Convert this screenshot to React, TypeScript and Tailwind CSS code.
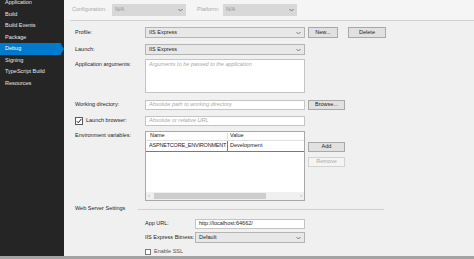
import React from 'react'

const navItems = ['Application', 'Build', 'Build Events', 'Package', 'Debug', 'Signing', 'TypeScript Build', 'Resources']

const Chevron = () => (
  <svg width="5" height="4" viewBox="0 0 5 4" className="shrink-0">
    <path d="M0.5 1 L2.5 3 L4.5 1" fill="none" stroke="#606060" strokeWidth="0.8" />
  </svg>
)

const Combo: React.FC<{ value: string; className?: string }> = ({ value, className = '' }) => (
  <div className={`flex items-center justify-between border border-[#b4b4b4] bg-[#e8e8e8] pl-[3px] pr-[3px] ${className}`}>
    <span>{value}</span>
    <Chevron />
  </div>
)

const Btn: React.FC<{ label: string; className?: string; disabled?: boolean }> = ({ label, className = '', disabled }) => (
  <div
    className={`flex items-center justify-center border ${
      disabled ? 'border-[#d2d2d2] bg-[#f4f4f4] text-[#a8a8a8]' : 'border-[#a8a8a8] bg-[#e1e1e1] text-[#222]'
    } ${className}`}
  >
    {label}
  </div>
)

const Field: React.FC<{ placeholder?: string; value?: string; className?: string }> = ({ placeholder, value, className = '' }) => (
  <div className={`flex items-center border border-[#c4c4c4] bg-white px-[3px] ${className}`}>
    {value ? <span>{value}</span> : <span className="italic text-[#a8a8a8]">{placeholder}</span>}
  </div>
)

export default function App() {
  return (
    <div className="flex h-[259px] w-[474px] flex-col overflow-hidden bg-[#f0f0f0] text-[5.5px] leading-none text-[#1e1e1e] [font-family:'Liberation_Sans',Arial,sans-serif]">
      <div className="flex h-[256px]">
        {/* Sidebar */}
        <div className="relative w-[64px] shrink-0 bg-[#252526]">
          <div className="mt-[-3px] flex flex-col">
            {navItems.map((item) => (
              <div
                key={item}
                className={`relative flex h-[11.5px] items-center pl-[5px] ${
                  item === 'Debug' ? 'mr-[3px] bg-[#007acc] text-white' : 'text-[#e8e8e8]'
                }`}
              >
                {item}
                {item === 'Debug' && (
                  <span className="absolute right-[-3px] top-1/2 h-0 w-0 -translate-y-1/2 border-y-[5.75px] border-l-[3px] border-y-transparent border-l-[#007acc]" />
                )}
              </div>
            ))}
          </div>
        </div>

        {/* Main */}
        <div className="flex min-w-0 flex-1 flex-col">
          {/* Config bar */}
          <div className="flex h-[20px] items-center bg-[#f5f5f5] pl-[8px] text-[#a8a8a8]">
            <span className="w-[40px]">Configuration:</span>
            <div className="flex h-[12px] w-[74px] items-center justify-between bg-[#d8d8d8] px-[3px] text-[#909090]">
              <span>N/A</span>
              <Chevron />
            </div>
            <span className="ml-[11px] w-[26px]">Platform:</span>
            <div className="flex h-[12px] w-[74px] items-center justify-between bg-[#d8d8d8] px-[3px] text-[#909090]">
              <span>N/A</span>
              <Chevron />
            </div>
          </div>
          <div className="ml-[6px] h-px bg-[#cfcfcf]" />

          <div className="h-[235px] overflow-hidden pl-[11px]">
            {/* Profile */}
            <div className="mt-[6px] flex h-[11px] items-center">
              <span className="w-[70px]">Profile:</span>
              <Combo value="IIS Express" className="h-full w-[160px]" />
              <Btn label="New..." className="ml-[3px] h-full w-[30px]" />
              <Btn label="Delete" className="ml-[10px] h-full w-[38px]" />
            </div>

            {/* Launch */}
            <div className="mt-[6px] flex h-[11px] items-center">
              <span className="w-[70px]">Launch:</span>
              <Combo value="IIS Express" className="h-full w-[160px]" />
            </div>

            {/* Application arguments */}
            <div className="mt-[4px] flex h-[34px]">
              <span className="mt-[3px] w-[70px]">Application arguments:</span>
              <div className="h-full w-[160px] border border-[#c4c4c4] bg-white px-[3px] pt-[2px] italic text-[#a8a8a8]">
                Arguments to be passed to the application
              </div>
            </div>

            {/* Working directory */}
            <div className="mt-[7px] flex h-[10px] items-center">
              <span className="w-[70px]">Working directory:</span>
              <Field placeholder="Absolute path to working directory" className="h-full w-[160px]" />
              <Btn label="Browse..." className="ml-[3px] h-full w-[37px]" />
            </div>

            {/* Launch browser */}
            <div className="mt-[6px] flex h-[10px] items-center">
              <span className="flex w-[70px] items-center">
                <span className="mr-[3px] flex h-[8px] w-[8px] items-center justify-center border border-[#5a5a5a] bg-white">
                  <svg width="6" height="6" viewBox="0 0 6 6">
                    <path d="M0.8 3.2 L2.3 4.8 L5.3 1" fill="none" stroke="#222" strokeWidth="1" />
                  </svg>
                </span>
                Launch browser:
              </span>
              <Field placeholder="Absolute or relative URL" className="h-full w-[160px]" />
            </div>

            {/* Environment variables */}
            <div className="mt-[5px] flex h-[70px]">
              <span className="mt-[2px] w-[70px]">Environment variables:</span>
              <div className="flex h-full w-[160px] flex-col border border-[#a8a8a8] bg-white">
                <div className="flex h-[9px] items-center border-b border-[#e0e0e0] bg-white">
                  <span className="w-[82px] border-r border-[#e0e0e0] pl-[4px]">Name</span>
                  <span className="pl-[2px]">Value</span>
                </div>
                <div className="flex h-[11px] items-center border-b-[1.5px] border-[#7a7a7a]">
                  <span className="flex h-full w-[82px] shrink-0 items-center overflow-hidden whitespace-nowrap border-r border-[#7a7a7a] pl-[3px] tracking-[-0.2px]">
                    ASPNETCORE_ENVIRONMENT
                  </span>
                  <span className="pl-[2px]">Development</span>
                </div>
                <div className="flex-1" />
                <div className="flex h-[8px] items-center bg-[#f0f0f0] px-[2px] text-[#a0a0a0]">
                  <span className="w-[6px]">‹</span>
                  <div className="h-[6px] w-[112px] bg-[#cdcdcd]" />
                  <div className="flex-1" />
                  <span>›</span>
                </div>
              </div>
              <div className="ml-[3px] flex flex-col">
                <Btn label="Add" className="mt-[11px] h-[10px] w-[37px]" />
                <Btn label="Remove" disabled className="mt-[5px] h-[10px] w-[37px]" />
              </div>
            </div>

            {/* Web Server Settings */}
            <div className="mt-[4px] flex h-[8px] items-center">
              <span className="w-[63px]">Web Server Settings</span>
              <div className="h-px w-[246px] bg-[#d0d0d0]" />
            </div>

            {/* App URL */}
            <div className="mt-[6px] flex h-[10px] items-center pl-[70px]">
              <span className="w-[50px]">App URL:</span>
              <Field value="http://localhost:64662/" className="h-full w-[110px]" />
            </div>

            {/* IIS Express Bitness */}
            <div className="mt-[3px] flex h-[11px] items-center pl-[70px]">
              <span className="w-[50px]">IIS Express Bitness:</span>
              <Combo value="Default" className="h-full w-[110px]" />
            </div>

            {/* Enable SSL */}
            <div className="mt-[5px] flex h-[7px] items-center pl-[70px] text-[#555]">
              <span className="mr-[3px] h-[6px] w-[6px] border border-[#7a7a7a] bg-white" />
              <span>Enable SSL</span>
            </div>
          </div>
        </div>
      </div>
      <div className="h-[3px] bg-[#a3a3a3]" />
    </div>
  )
}
